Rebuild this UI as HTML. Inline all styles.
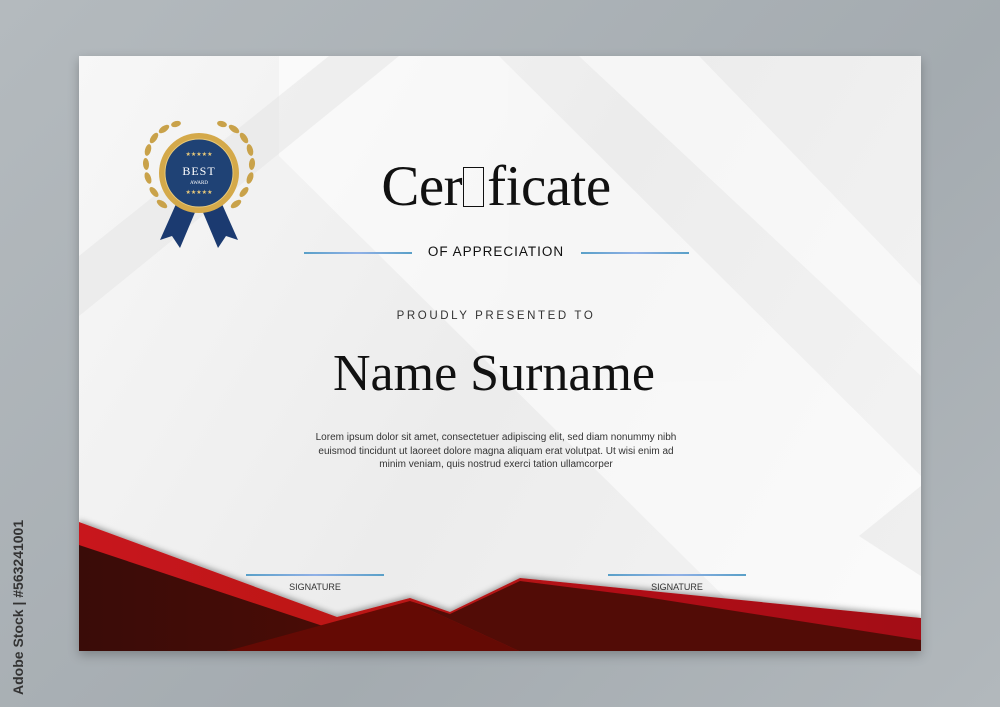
<!DOCTYPE html>
<html><head><meta charset="utf-8"><style>
html,body{margin:0;padding:0}
body{width:1000px;height:707px;overflow:hidden;position:relative;background:linear-gradient(135deg,#b4babe,#a4abb0 60%,#b2b8bc);font-family:"Liberation Sans",sans-serif}
.card{position:absolute;left:79px;top:56px;width:842px;height:595px;background:linear-gradient(120deg,#f7f7f7,#ececec 50%,#f4f4f4);box-shadow:0 4px 10px rgba(0,0,0,.25);overflow:hidden}
.t{position:absolute;left:0;width:1000px;text-align:center;color:#111}
.ser{font-family:"Liberation Serif",serif}
.box{display:inline-block;width:19px;height:38px;border:1.5px solid #111;vertical-align:-2px;margin:0 3px 0 1px}
.line{position:absolute;height:1.5px;background:linear-gradient(90deg,#5aa0c8,#8fb0e6,#5aa0c8)}
</style></head><body>
<div class="card">
<svg width="842" height="595" style="position:absolute;left:0;top:0">
<g fill="#fff" opacity=".55">
<polygon points="200,0 420,0 842,420 842,595 700,595 200,100"/>
<polygon points="500,0 620,0 842,230 842,320"/>
</g>
<g fill="#e4e4e4" opacity=".5"><polygon points="0,200 250,0 320,0 0,260"/><polygon points="780,480 842,430 842,520"/></g>
<defs>
<linearGradient id="r1" x1="0" x2="1"><stop offset="0" stop-color="#c8161b"/><stop offset="1" stop-color="#a30e12"/></linearGradient>
<linearGradient id="d1" x1="0" x2="1"><stop offset="0" stop-color="#3a0c08"/><stop offset="1" stop-color="#4a0c06"/></linearGradient>
<filter id="sh"><feDropShadow dx="0" dy="-2" stdDeviation="3" flood-opacity=".35"/></filter>
</defs>
<g filter="url(#sh)">
<polygon points="0,466 258,561 331,542 371,556 441,522 842,562 842,595 0,595" fill="url(#r1)"/>
</g>
<polygon points="0,489 262,576 148,595 0,595" fill="url(#d1)"/>
<polygon points="148,595 331,545 440,595" fill="#640a04"/>
<polygon points="331,545 371,558 441,525 560,540 842,584 842,595 440,595" fill="#520c06"/>
</svg>
<!-- badge -->
<svg width="130" height="140" style="position:absolute;left:55px;top:62px" viewBox="0 0 130 140">
<g fill="#c9a24a">
<g id="lf"><ellipse cx="14" cy="60" rx="3" ry="6" transform="rotate(-20 14 60)"/><ellipse cx="12" cy="46" rx="3" ry="6" transform="rotate(-5 12 46)"/><ellipse cx="14" cy="32" rx="3" ry="6" transform="rotate(15 14 32)"/><ellipse cx="20" cy="20" rx="3" ry="6" transform="rotate(35 20 20)"/><ellipse cx="30" cy="11" rx="3" ry="6" transform="rotate(55 30 11)"/><ellipse cx="42" cy="6" rx="3" ry="5" transform="rotate(75 42 6)"/><ellipse cx="20" cy="74" rx="3" ry="6" transform="rotate(-40 20 74)"/><ellipse cx="28" cy="86" rx="3" ry="6" transform="rotate(-55 28 86)"/></g>
<use href="#lf" transform="translate(130 0) scale(-1 1)"/>
</g>
<polygon points="42,86 62,92 46,130 38,118 26,122" fill="#1b3a70"/>
<polygon points="88,86 68,92 84,130 92,118 104,122" fill="#1b3a70"/>
<circle cx="65" cy="55" r="40" fill="#d4a94a"/>
<circle cx="65" cy="55" r="34" fill="#1f4275" stroke="#e8c97a" stroke-width="1"/>
<text x="65" y="38" text-anchor="middle" font-size="6" fill="#e8c97a">★★★★★</text>
<text x="65" y="57" text-anchor="middle" font-size="12" fill="#fff" font-family="Liberation Serif" letter-spacing="1">BEST</text>
<text x="65" y="66" text-anchor="middle" font-size="5" fill="#fff" font-family="Liberation Serif">AWARD</text>
<text x="65" y="76" text-anchor="middle" font-size="6" fill="#e8c97a">★★★★★</text>
</svg>
</div>
<div class="t ser" style="top:154px;font-size:57px;letter-spacing:-0.5px;left:-4px">Cer<span class="box"></span>ficate</div>
<div class="line" style="left:304px;top:252px;width:108px"></div>
<div class="line" style="left:581px;top:252px;width:108px"></div>
<div class="t" style="top:244px;font-size:13.5px;letter-spacing:1px;left:-4px">OF APPRECIATION</div>
<div class="t" style="top:310px;font-size:11.5px;letter-spacing:2.6px;color:#333;left:-4px">PROUDLY PRESENTED TO</div>
<div class="t ser" style="top:344px;font-size:52px;left:-6px">Name Surname</div>
<div class="t" style="top:431px;font-size:10px;line-height:13.5px;color:#333;left:-4px">Lorem ipsum dolor sit amet, consectetuer adipiscing elit, sed diam nonummy nibh<br>euismod tincidunt ut laoreet dolore magna aliquam erat volutpat. Ut wisi enim ad<br>minim veniam, quis nostrud exerci tation ullamcorper</div>
<div class="line" style="left:246px;top:574px;width:138px"></div>
<div class="line" style="left:608px;top:574px;width:138px"></div>
<div style="position:absolute;left:246px;width:138px;top:582px;text-align:center;font-size:9px;color:#333">SIGNATURE</div>
<div style="position:absolute;left:608px;width:138px;top:582px;text-align:center;font-size:9px;color:#333">SIGNATURE</div>
<div style="position:absolute;left:10px;top:475px;width:20px;height:220px;writing-mode:vertical-rl;transform:rotate(180deg);font-size:14px;font-weight:bold;color:#333">Adobe Stock | #563241001</div>
</body></html>
